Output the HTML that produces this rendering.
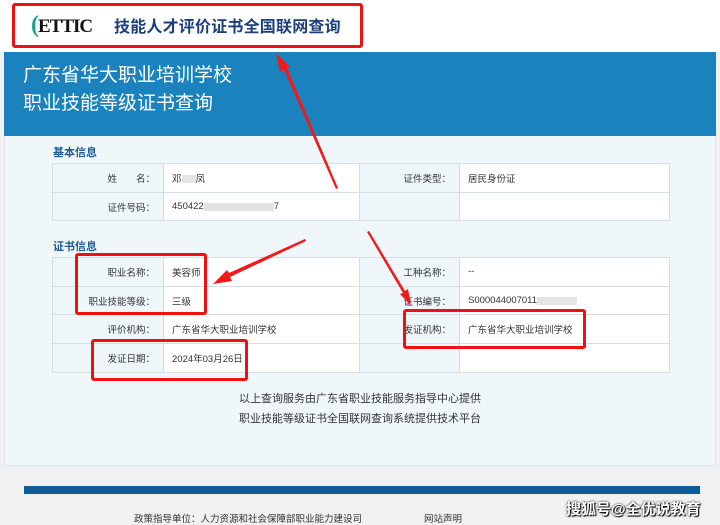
<!DOCTYPE html>
<html><head><meta charset="utf-8"><style>
*{margin:0;padding:0;box-sizing:border-box}
body{width:720px;height:525px;overflow:hidden;background:#f1f1f1;font-family:"Liberation Sans","Noto Sans CJK SC",sans-serif;position:relative}
.abs{position:absolute}
.top{left:0;top:0;width:720px;height:52px;background:#fff}
.banner{left:4px;top:52px;width:712px;height:84px;background:#1a82bd;color:#fff;font-size:19px;line-height:28px;padding:10px 0 0 19px}
.panel{left:4px;top:136px;width:712px;height:330px;background:#eff7fb;border:1px solid #dde6ec;border-top:none}
.h{color:#1e5a96;font-size:11px;font-weight:bold}
table{border-collapse:collapse;font-size:9.5px;color:#333;background:#fff}
td{border:1px solid #d6dde3;height:28.7px;padding:0 8px}
td.l{background:#eef6fa;text-align:right;width:111px}
td.v{width:196px}
td.l2{background:#eef6fa;text-align:right;width:100px}
.rb{border:3px solid #f01010;border-radius:3px}
.blur{display:inline-block;background:#e4e4e4;height:8px;vertical-align:middle}
</style></head><body>
<div class="abs top"></div>
<div class="abs rb" style="left:12px;top:3px;width:351px;height:45px"></div>
<div class="abs" style="left:31px;top:12px;font-size:19px;font-weight:bold;color:#111;font-family:'Liberation Serif',serif;letter-spacing:-1px"><span style="color:#1aa38d;font-size:24px">(</span>ETTIC</div>
<div class="abs" style="left:114px;top:13px;font-size:16px;font-weight:bold;color:#1c3f7c;letter-spacing:0.2px">技能人才评价证书全国联网查询</div>
<div class="abs banner">广东省华大职业培训学校<br>职业技能等级证书查询</div>
<div class="abs panel"></div>
<div class="abs h" style="left:53px;top:144px">基本信息</div>
<table class="abs" style="left:52px;top:163px;width:618px">
<tr><td class="l">姓　　名：</td><td class="v">邓<span class="blur" style="width:14px"></span>凤</td><td class="l2">证件类型：</td><td>居民身份证</td></tr>
<tr><td class="l">证件号码：</td><td class="v">450422<span class="blur" style="width:70px"></span>7</td><td class="l2"></td><td></td></tr>
</table>
<div class="abs h" style="left:53px;top:238px">证书信息</div>
<table class="abs" style="left:52px;top:257px;width:618px">
<tr><td class="l">职业名称：</td><td class="v">美容师</td><td class="l2">工种名称：</td><td>--</td></tr>
<tr><td class="l">职业技能等级：</td><td class="v">三级</td><td class="l2">证书编号：</td><td>S000044007011<span class="blur" style="width:40px"></span></td></tr>
<tr><td class="l">评价机构：</td><td class="v">广东省华大职业培训学校</td><td class="l2">发证机构：</td><td>广东省华大职业培训学校</td></tr>
<tr><td class="l">发证日期：</td><td class="v">2024年03月26日</td><td class="l2"></td><td></td></tr>
</table>
<div class="abs rb" style="left:75px;top:253px;width:132px;height:62px"></div>
<div class="abs rb" style="left:91px;top:339px;width:157px;height:42px"></div>
<div class="abs rb" style="left:403px;top:309px;width:183px;height:40px"></div>
<svg class="abs" style="left:0;top:0" width="720" height="525">
<g fill="#f01a1a">
<polygon points="338,188 336,189 284,70 280,72 276,53 290,67 287,68"/>
<polygon points="305,239 306,241 230,277 232,281 213,284 227,270 229,273"/>
<polygon points="367,232 369,231 405,291 408,289 411,306 400,294 403,293"/>
</g>
</svg>
<div class="abs" style="left:0;top:389px;width:720px;text-align:center;font-size:11px;color:#333;line-height:20px">以上查询服务由广东省职业技能服务指导中心提供<br>职业技能等级证书全国联网查询系统提供技术平台</div>
<div class="abs" style="left:24px;top:486px;width:676px;height:8px;background:#0d5b98"></div>
<div class="abs" style="left:134px;top:511px;font-size:9.5px;color:#333">政策指导单位：人力资源和社会保障部职业能力建设司</div>
<div class="abs" style="left:424px;top:511px;font-size:9.5px;color:#333">网站声明</div>
<div class="abs" style="left:566px;top:498px;font-size:15px;font-weight:bold;color:#fff;text-shadow:0 0 2px #000,1px 1px 1px #000">搜狐号@全优说教育</div>
</body></html>
